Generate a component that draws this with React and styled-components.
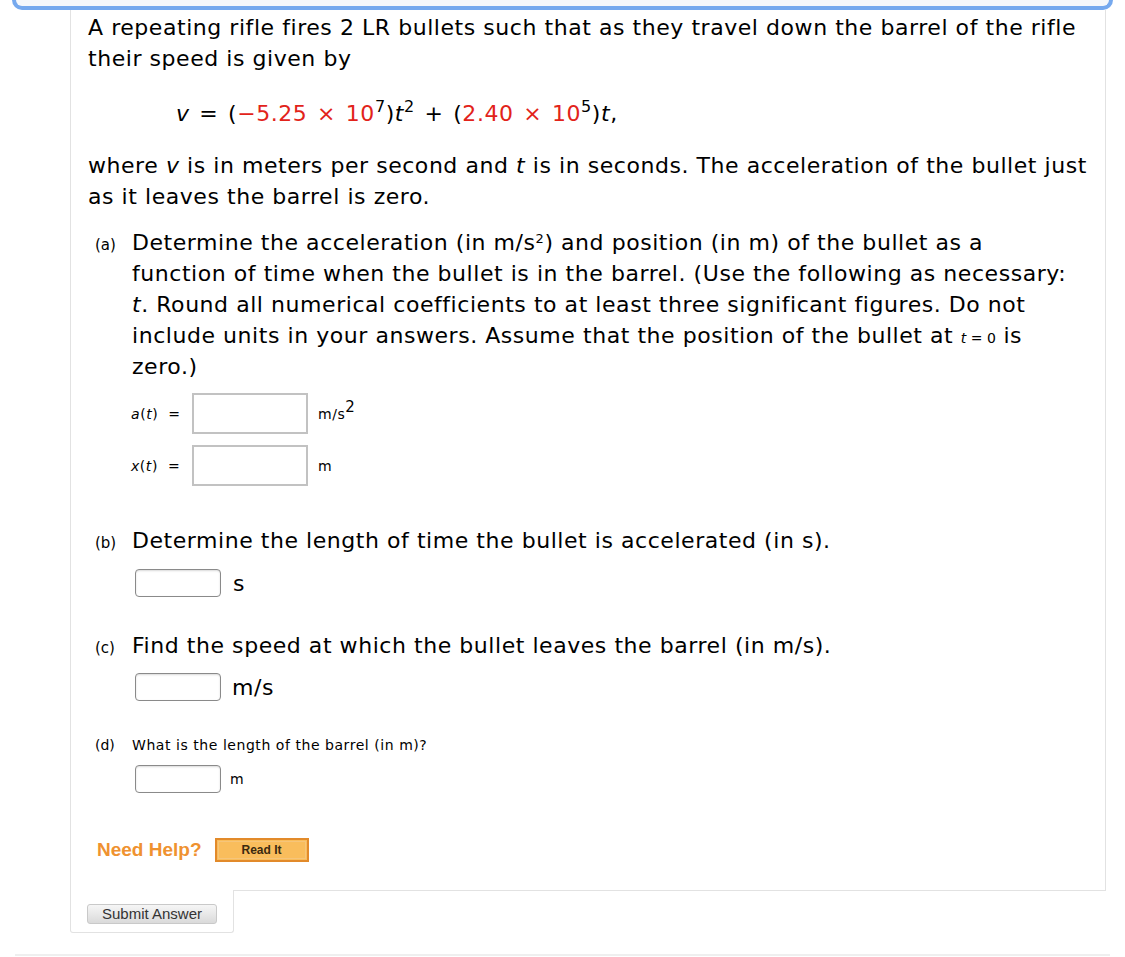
import React from "react";
import styled, { createGlobalStyle } from "styled-components";

const Global = createGlobalStyle`
  html, body { margin: 0; padding: 0; background: #fff; }
  body { font-family: "DejaVu Sans", Verdana, sans-serif; color: #000; }
`;

const TopBar = styled.div`
  margin: 0 12px 0 12px;
  height: 6px;
  border: 4px solid #76a9ee;
  border-top: 0;
  border-radius: 0 0 12px 12px;
  background: #f6f8fb;
`;

const Panel = styled.div`
  margin-left: 70px;
  width: 1036px;
`;

const Content = styled.div`
  border-left: 1px solid #e2e2e2;
  border-right: 1px solid #e2e2e2;
  padding: 2px 12px 28px 17px;
  letter-spacing: 0.55px;
`;

const Para = styled.p`
  margin: ${(p) => p.$mt || 0}px 0 0 0;
  font-size: 22px;
  line-height: 31px;
`;

const Equation = styled.div`
  margin: 24px 0 0 88px;
  font-size: 22px;
  line-height: 31px;
  word-spacing: 2.2px;
`;

const Red = styled.span`
  color: #e2231a;
`;

const Sup = styled.sup`
  font-size: ${(p) => p.$size || 16}px;
  line-height: 0;
  vertical-align: ${(p) => p.$raise || 9}px;
`;

const Part = styled.div`
  display: grid;
  grid-template-columns: 37px 1fr;
  align-items: baseline;
  margin-top: ${(p) => p.$mt || 0}px;
  padding-left: 7px;
`;

const PartLabel = styled.span`
  font-size: ${(p) => p.$size || 15}px;
  letter-spacing: 0;
`;

const PartText = styled.div`
  font-size: ${(p) => p.$size || 22}px;
  line-height: ${(p) => p.$lh || 31}px;
`;

const SmallT = styled.span`
  font-size: 14px;
  line-height: 0;
  letter-spacing: 0;
  i { font-style: italic; }
`;

const AnswerRow = styled.div`
  display: flex;
  align-items: center;
  margin: ${(p) => p.$mt || 0}px 0 0 43px;
  font-size: 14px;
`;

const VarLabel = styled.span`
  width: 61px;
  white-space: pre;
`;

const BoxInput = styled.input`
  box-sizing: border-box;
  width: 116px;
  height: 41px;
  border: 2px solid #c2c2c2;
  border-radius: 0;
  margin: 0;
  padding: 0;
  background: #fff;
`;

const Unit = styled.span`
  margin-left: ${(p) => p.$ml || 10}px;
  font-size: ${(p) => p.$size || 14}px;
`;

const InlineRow = styled.div`
  display: flex;
  align-items: center;
  margin: ${(p) => p.$mt || 0}px 0 0 47px;
`;

const RoundInput = styled.input`
  box-sizing: border-box;
  width: 86px;
  height: 28px;
  border: 1px solid #8a8a8a;
  border-radius: 4px;
  box-shadow: inset 0 1px 2px rgba(0, 0, 0, 0.15);
  margin: 0;
  padding: 0;
  background: #fff;
`;

const HelpRow = styled.div`
  display: flex;
  align-items: center;
  margin: 45px 0 0 9px;
  gap: 13px;
  letter-spacing: 0;
`;

const NeedHelp = styled.span`
  font-family: "Liberation Sans", Arial, sans-serif;
  font-weight: bold;
  font-size: 19px;
  color: #ef9230;
`;

const ReadIt = styled.button`
  box-sizing: border-box;
  width: 94px;
  height: 24px;
  border: 2px solid #e28a2a;
  outline: 1px solid #f6c57a;
  outline-offset: -4px;
  background: #f9bd5c;
  font-family: "Liberation Sans", Arial, sans-serif;
  font-weight: bold;
  font-size: 12px;
  color: #3b2a10;
  padding: 0;
  margin: 0;
`;

const Footer = styled.div`
  display: flex;
`;

const Tab = styled.div`
  box-sizing: border-box;
  width: 164px;
  height: 43px;
  border: 1px solid #e2e2e2;
  border-top: 0;
  border-radius: 0 0 3px 3px;
  padding: 14px 0 0 16px;
`;

const Filler = styled.div`
  flex: 1;
  border-top: 1px solid #e2e2e2;
`;

const SubmitButton = styled.button`
  box-sizing: border-box;
  width: 130px;
  height: 20px;
  border: 1px solid #c9c9c9;
  border-radius: 3px;
  background: linear-gradient(#f6f6f6, #dadada);
  font-family: "Liberation Sans", Arial, sans-serif;
  font-size: 15px;
  color: #333;
  padding: 0;
  margin: 0;
  line-height: 18px;
`;

const BottomRule = styled.div`
  margin: 21px 15px 0 15px;
  border-top: 2px solid #efefef;
`;

export default function App() {
  return (
    <>
      <Global />
      <TopBar />
      <Panel>
        <Content>
          <Para>
            A repeating rifle fires 2 LR bullets such that as they travel down the barrel of the rifle
            <br />
            their speed is given by
          </Para>
          <Equation>
            <i>v</i> = (<Red>−5.25 × 10</Red>
            <Sup>7</Sup>)<i>t</i>
            <Sup>2</Sup> + (<Red>2.40 × 10</Red>
            <Sup>5</Sup>)<i>t</i>,
          </Equation>
          <Para $mt={21}>
            where <i>v</i> is in meters per second and <i>t</i> is in seconds. The acceleration of the bullet just
            <br />
            as it leaves the barrel is zero.
          </Para>

          <Part $mt={15}>
            <PartLabel>(a)</PartLabel>
            <PartText>
              Determine the acceleration (in m/s<Sup $size={13} $raise={7}>2</Sup>) and position (in m) of the bullet as a
              <br />
              function of time when the bullet is in the barrel. (Use the following as necessary:
              <br />
              <i>t</i>. Round all numerical coefficients to at least three significant figures. Do not
              <br />
              include units in your answers. Assume that the position of the bullet at{" "}
              <SmallT>
                <i>t</i> = 0
              </SmallT>{" "}
              is
              <br />
              zero.)
            </PartText>
          </Part>
          <AnswerRow $mt={11}>
            <VarLabel>
              <i>a</i>(<i>t</i>)  =
            </VarLabel>
            <BoxInput type="text" />
            <Unit>
              m/s<Sup $size={15} $raise={7}>2</Sup>
            </Unit>
          </AnswerRow>
          <AnswerRow $mt={11}>
            <VarLabel>
              <i>x</i>(<i>t</i>)  =
            </VarLabel>
            <BoxInput type="text" />
            <Unit>m</Unit>
          </AnswerRow>

          <Part $mt={39}>
            <PartLabel>(b)</PartLabel>
            <PartText>Determine the length of time the bullet is accelerated (in s).</PartText>
          </Part>
          <InlineRow $mt={13}>
            <RoundInput type="text" />
            <Unit $ml={12} $size={22}>s</Unit>
          </InlineRow>

          <Part $mt={33}>
            <PartLabel>(c)</PartLabel>
            <PartText>Find the speed at which the bullet leaves the barrel (in m/s).</PartText>
          </Part>
          <InlineRow $mt={12}>
            <RoundInput type="text" />
            <Unit $ml={11} $size={22}>m/s</Unit>
          </InlineRow>

          <Part $mt={34}>
            <PartLabel $size={14}>(d)</PartLabel>
            <PartText $size={14} $lh={20}>What is the length of the barrel (in m)?</PartText>
          </Part>
          <InlineRow $mt={10}>
            <RoundInput type="text" />
            <Unit $ml={9}>m</Unit>
          </InlineRow>

          <HelpRow>
            <NeedHelp>Need Help?</NeedHelp>
            <ReadIt>Read It</ReadIt>
          </HelpRow>
        </Content>
        <Footer>
          <Tab>
            <SubmitButton>Submit Answer</SubmitButton>
          </Tab>
          <Filler />
        </Footer>
      </Panel>
      <BottomRule />
    </>
  );
}
